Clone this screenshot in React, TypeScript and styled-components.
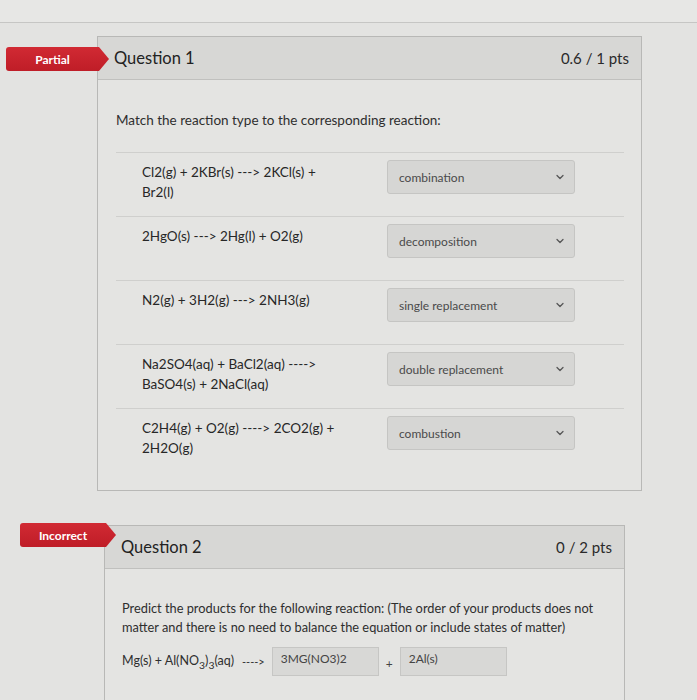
import React from "react";
import styled, { createGlobalStyle } from "styled-components";
import { ChevronDown } from "lucide-react";

const GlobalStyle = createGlobalStyle`
  html, body {
    margin: 0;
    padding: 0;
    background: #e3e3e1;
  }
  body {
    font-family: Lato, "Open Sans", "Liberation Sans", sans-serif;
    color: #2b2b2b;
  }
  * { box-sizing: border-box; }
`;

const Page = styled.div`
  width: 697px;
  height: 700px;
  overflow: hidden;
`;

const TopBar = styled.div`
  height: 23px;
  background: #e7e7e5;
  border-bottom: 1px solid #c6c6c4;
`;

const Card = styled.section<{ $left: number; $width: number; $gap: number }>`
  position: relative;
  margin-left: ${(p) => p.$left}px;
  margin-top: ${(p) => p.$gap}px;
  width: ${(p) => p.$width}px;
  border: 1px solid #b8b8b6;
  background: #e4e4e2;
`;

const Header = styled.header`
  height: 43px;
  display: flex;
  align-items: center;
  justify-content: space-between;
  padding: 0 12px 0 16px;
  background: #d7d7d5;
  border-bottom: 1px solid #c0c0be;
`;

const Title = styled.h2`
  margin: 0;
  font-size: 16.5px;
  font-weight: 400;
  color: #222;
`;

const Points = styled.span`
  font-size: 15px;
  color: #2a2a2a;
`;

const Badge = styled.div<{ $top: number; $width: number }>`
  position: absolute;
  right: calc(100% - 11px);
  top: ${(p) => p.$top}px;
  width: ${(p) => p.$width}px;
  height: 24px;
  padding-right: 10px;
  display: flex;
  align-items: center;
  justify-content: center;
  background: linear-gradient(#d12a33, #bf1d27);
  border-radius: 3px 0 0 3px;
  clip-path: polygon(0 0, calc(100% - 10px) 0, 100% 50%, calc(100% - 10px) 100%, 0 100%);
  color: #fff;
  font-size: 12px;
  font-weight: 700;
`;

const Body = styled.div<{ $pad: string }>`
  padding: ${(p) => p.$pad};
`;

const Prompt = styled.p<{ $size: number; $line: number; $after: number }>`
  margin: 0 0 ${(p) => p.$after}px;
  font-size: ${(p) => p.$size}px;
  line-height: ${(p) => p.$line}px;
  color: #2e2e2e;
`;

const MatchRow = styled.div`
  display: grid;
  grid-template-columns: 245px 188px;
  min-height: 64px;
  padding: 7px 0 0 26px;
  border-top: 1px solid #cfcfcd;
`;

const Equation = styled.div`
  max-width: 195px;
  padding-top: 2px;
  font-size: 13.5px;
  line-height: 20px;
  color: #272727;
`;

const Select = styled.div`
  height: 34px;
  display: flex;
  align-items: center;
  justify-content: space-between;
  padding: 0 8px 0 11px;
  background: #d6d6d4;
  border: 1px solid #c5c5c3;
  border-radius: 3px;
  font-size: 12px;
  color: #4a4a4a;
`;

const AnswerLine = styled.div`
  display: flex;
  align-items: center;
  font-size: 12.5px;
  color: #2e2e2e;
`;

const Arrow = styled.span`
  margin: 0 7px 0 8px;
  font-size: 11px;
`;

const Blank = styled.div`
  width: 107px;
  height: 29px;
  padding: 4px 8px;
  background: #d8d8d6;
  border: 1px solid #c6c6c4;
  font-size: 12px;
  line-height: 14px;
  color: #444;
`;

const Plus = styled.span`
  margin: 4px 7px 0;
  font-size: 12px;
  color: #444;
`;

const matches = [
  { eq: "Cl2(g) + 2KBr(s) ---> 2KCl(s) + Br2(l)", answer: "combination" },
  { eq: "2HgO(s) ---> 2Hg(l) + O2(g)", answer: "decomposition" },
  { eq: "N2(g) + 3H2(g) ---> 2NH3(g)", answer: "single replacement" },
  { eq: "Na2SO4(aq) + BaCl2(aq) ----> BaSO4(s) + 2NaCl(aq)", answer: "double replacement" },
  { eq: "C2H4(g) + O2(g) ----> 2CO2(g) + 2H2O(g)", answer: "combustion" },
];

export default function App() {
  return (
    <Page>
      <GlobalStyle />
      <TopBar />

      <Card $left={97} $width={545} $gap={13}>
        <Badge $top={10} $width={103}>Partial</Badge>
        <Header>
          <Title>Question 1</Title>
          <Points>0.6 / 1 pts</Points>
        </Header>
        <Body $pad="30px 17px 18px 18px">
          <Prompt $size={13.5} $line={20} $after={22}>
            Match the reaction type to the corresponding reaction:
          </Prompt>
          {matches.map((m) => (
            <MatchRow key={m.answer}>
              <Equation>{m.eq}</Equation>
              <Select>
                {m.answer}
                <ChevronDown size={12} strokeWidth={2.5} color="#555" />
              </Select>
            </MatchRow>
          ))}
        </Body>
      </Card>

      <Card $left={104} $width={521} $gap={34}>
        <Badge $top={-3} $width={96}>Incorrect</Badge>
        <Header>
          <Title>Question 2</Title>
          <Points>0 / 2 pts</Points>
        </Header>
        <Body $pad="30px 17px 40px 17px">
          <Prompt $size={12.8} $line={19} $after={10}>
            Predict the products for the following reaction: (The order of your products does not
            matter and there is no need to balance the equation or include states of matter)
          </Prompt>
          <AnswerLine>
            <span>
              Mg(s) + Al(NO<sub>3</sub>)<sub>3</sub>(aq)
            </span>
            <Arrow>----&gt;</Arrow>
            <Blank>3MG(NO3)2</Blank>
            <Plus>+</Plus>
            <Blank>2Al(s)</Blank>
          </AnswerLine>
        </Body>
      </Card>
    </Page>
  );
}
